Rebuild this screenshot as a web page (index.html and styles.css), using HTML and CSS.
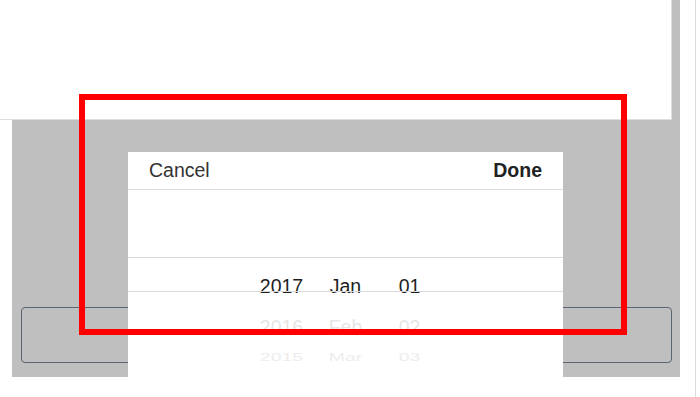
FILE: index.html
```html
<!DOCTYPE html>
<html>
<head>
<meta charset="utf-8">
<link rel="stylesheet" href="styles.css">
</head>
<body>
<div class="page">
  <div class="main">
    <div class="top">
      <div class="sheet"></div>
      <div class="scrollbar"></div>
    </div>
    <div class="backdrop">
      <div class="field"></div>
    </div>
  </div>
  <div class="rail"></div>
</div>

<div class="modal">
  <div class="modal-header">
    <span class="cancel">Cancel</span>
    <span class="done">Done</span>
  </div>
  <div class="picker">
    <div class="row row-current">
      <span class="cell">2017</span><span class="cell">Jan</span><span class="cell">01</span>
    </div>
    <div class="row row-next">
      <span class="cell">2016</span><span class="cell">Feb</span><span class="cell">02</span>
    </div>
    <div class="row row-far">
      <span class="cell">2015</span><span class="cell">Mar</span><span class="cell">03</span>
    </div>
    <div class="sel-line sel-top"></div>
    <div class="sel-line sel-bottom"></div>
  </div>
</div>

<div class="annotation"></div>
</body>
</html>
```

FILE: styles.css
```css
html, body {
  margin: 0;
  padding: 0;
  background: #ffffff;
  font-family: "Liberation Sans", Arial, sans-serif;
  overflow: hidden;
}

.page {
  display: flex;
  width: 700px;
  height: 397px;
}

.main {
  width: 680px;
  display: flex;
  flex-direction: column;
}

.top {
  display: flex;
  height: 120px;
}

.sheet {
  width: 671px;
  height: 119px;
  background: #ffffff;
  border-right: 1px solid #dedede;
  border-bottom: 1px solid #dedede;
}

.scrollbar {
  width: 8px;
  background: #bfbfbf;
}

.backdrop {
  margin-left: 12px;
  height: 257px;
  background: #bfbfbf;
  padding: 187px 8px 0 9px;
  box-sizing: border-box;
}

.field {
  height: 56px;
  border: 1.5px solid #5b6472;
  border-radius: 4px;
  box-sizing: border-box;
}

.rail {
  margin-left: 15px;
  width: 1px;
  background: #dcdcdc;
}

.modal {
  position: absolute;
  left: 128px;
  top: 152px;
  width: 435px;
  height: 245px;
  background: #ffffff;
  overflow: hidden;
}

.modal-header {
  height: 37px;
  border-bottom: 1px solid #dddddd;
  display: flex;
  align-items: center;
  justify-content: space-between;
  padding: 0 21px;
  font-size: 19.5px;
}

.cancel {
  color: #333333;
}

.done {
  color: #222222;
  font-weight: bold;
}

.picker {
  position: relative;
  padding-top: 86px;
}

.row {
  display: flex;
  justify-content: center;
  font-size: 19.5px;
  line-height: 20px;
}

.cell {
  width: 64px;
  text-align: center;
}

.row-current {
  height: 41px;
  color: #1e1e1e;
}

.row-next {
  height: 30px;
  color: #e6e6e6;
}

.row-far {
  height: 20px;
  color: #ededed;
  transform: scaleY(0.57);
}

.sel-line {
  position: absolute;
  left: 0;
  right: 0;
  height: 1px;
  background: #d9d9d9;
}

.sel-top {
  top: 67px;
}

.sel-bottom {
  top: 101px;
}

.annotation {
  position: absolute;
  left: 79px;
  top: 94px;
  width: 548px;
  height: 241px;
  border: 6px solid #ff0000;
  box-sizing: border-box;
}
```
